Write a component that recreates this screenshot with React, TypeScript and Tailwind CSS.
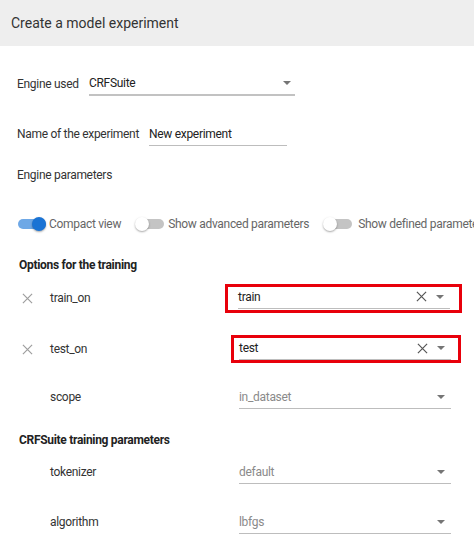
import React from "react";

const font = { fontFamily: "Roboto, 'Noto Sans', sans-serif" };

const ClearIcon = ({ className = "" }: { className?: string }) => (
  <svg viewBox="0 0 12 12" className={className} fill="none" stroke="currentColor" strokeWidth="1.3">
    <path d="M1 1 L11 11 M11 1 L1 11" />
  </svg>
);

const Arrow = () => (
  <svg viewBox="0 0 8 4" className="w-[8px] h-[4px] text-[#757575]" fill="currentColor">
    <path d="M0 0 L8 0 L4 4 Z" />
  </svg>
);

const Switch = ({ on }: { on: boolean }) => (
  <div className="relative w-[29px] h-[14px] shrink-0">
    <div
      className={`absolute left-[1px] right-0 top-[2px] h-[10px] rounded-full ${
        on ? "bg-[#6ea8e6]" : "bg-[#c4c4c4]"
      }`}
    />
    <div
      className={`absolute top-0 w-[14px] h-[14px] rounded-full shadow-[0_1px_2px_rgba(0,0,0,0.35)] ${
        on ? "right-0 bg-[#1a73d4]" : "left-0 bg-white"
      }`}
    />
  </div>
);

type SelectProps = { value: string; muted?: boolean; clearable?: boolean };

const ParamSelect = ({ value, muted, clearable }: SelectProps) => (
  <div className="w-[212px] h-[23px] flex items-center border-b border-[#bdbdbd]">
    <span className={`flex-1 ${muted ? "text-[#8a8a8a]" : "text-[#222]"}`}>{value}</span>
    {clearable && <ClearIcon className="w-[11px] h-[11px] text-[#555] mr-[9px]" />}
    <div className="w-[8px] mr-[6px] flex">
      <Arrow />
    </div>
  </div>
);

type RowProps = {
  label: string;
  removable?: boolean;
  children: React.ReactNode;
  className?: string;
};

const ParamRow = ({ label, removable, children, className = "" }: RowProps) => (
  <div className={`h-[30px] flex items-center pl-[22px] ${className}`}>
    <div className="w-[28px] flex">
      {removable && <ClearIcon className="w-[11px] h-[11px] text-[#9e9e9e]" />}
    </div>
    <div className="w-[189px] text-[#333]">{label}</div>
    {children}
  </div>
);

export default function App() {
  return (
    <div
      className="w-[474px] h-[548px] overflow-hidden bg-white text-[12px] tracking-[-0.3px] whitespace-nowrap"
      style={font}
    >
      <div className="h-[46px] bg-[#eeeeee] flex items-center px-[11px]">
        <h1 className="text-[14px] tracking-normal text-[#333]">Create a model experiment</h1>
      </div>

      <div className="mt-[24px] h-[28px] flex items-center pl-[17px]">
        <span className="w-[72px] text-[#333]">Engine used</span>
        <div className="w-[206px] h-[24px] flex items-center border-b-2 border-[#c2c2c2]">
          <span className="flex-1 text-[#222]">CRFSuite</span>
          <div className="w-[8px] mr-[4px] flex">
            <Arrow />
          </div>
        </div>
      </div>

      <div className="mt-[22px] h-[28px] flex items-center pl-[17px]">
        <span className="w-[132px] text-[#333]">Name of the experiment</span>
        <div className="w-[138px] h-[24px] flex items-center border-b border-[#bdbdbd]">
          <span className="text-[#222]">New experiment</span>
        </div>
      </div>

      <div className="mt-[17px] h-[20px] flex items-center pl-[17px] text-[#333]">
        Engine parameters
      </div>

      <div className="mt-[29px] h-[20px] flex items-center pl-[17px] text-[#666]">
        <Switch on />
        <span className="ml-[3px]">Compact view</span>
        <div className="ml-[14px]">
          <Switch on={false} />
        </div>
        <span className="ml-[4px]">Show advanced parameters</span>
        <div className="ml-[14px]">
          <Switch on={false} />
        </div>
        <span className="ml-[6px]">Show defined parameters</span>
      </div>

      <div className="mt-[21px] h-[20px] flex items-center pl-[19px] font-bold text-[#222]">
        Options for the training
      </div>

      <ParamRow label="train_on" removable className="mt-[8px]">
        <div className="-ml-[14px] h-[29px] border-[3px] border-[#e8000b] pl-[10px] pr-[9px] flex items-end pb-[1px]">
          <ParamSelect value="train" clearable />
        </div>
      </ParamRow>

      <ParamRow label="test_on" removable className="mt-[21px]">
        <div className="-ml-[8px] h-[28px] border-[3px] border-[#e8000b] pl-[5px] pr-[7px] flex items-end">
          <ParamSelect value="test" clearable />
        </div>
      </ParamRow>

      <ParamRow label="scope" className="mt-[18px]">
        <ParamSelect value="in_dataset" muted />
      </ParamRow>

      <div className="mt-[18px] h-[20px] flex items-center pl-[19px] font-bold text-[#222]">
        CRFSuite training parameters
      </div>

      <ParamRow label="tokenizer" className="mt-[7px]">
        <ParamSelect value="default" muted />
      </ParamRow>

      <ParamRow label="algorithm" className="mt-[20px]">
        <ParamSelect value="lbfgs" muted />
      </ParamRow>
    </div>
  );
}
